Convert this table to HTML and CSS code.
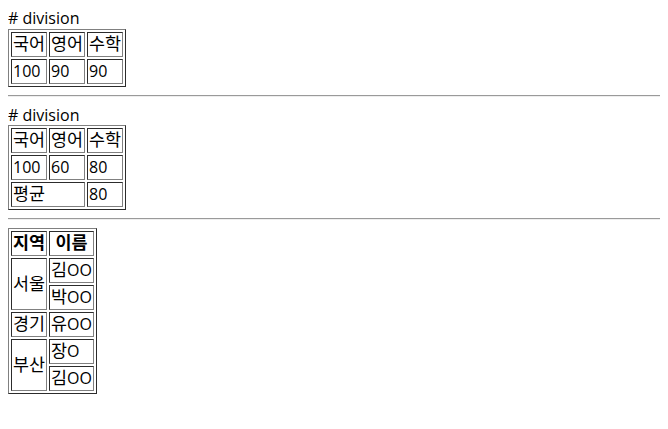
FILE: index.html
```html
<!DOCTYPE html>
<html lang="ko">
<head>
<meta charset="utf-8">
<link rel="stylesheet" href="styles.css">
</head>
<body>
<div class="title"># division</div>
<table class="grid">
  <tr><td><span class="ko">국어</span></td><td><span class="ko">영어</span></td><td><span class="ko">수학</span></td></tr>
  <tr><td>100</td><td>90</td><td>90</td></tr>
</table>
<hr class="rule">
<div class="title"># division</div>
<table class="grid">
  <tr><td><span class="ko">국어</span></td><td><span class="ko">영어</span></td><td><span class="ko">수학</span></td></tr>
  <tr><td>100</td><td>60</td><td>80</td></tr>
  <tr><td colspan="2"><span class="ko">평균</span></td><td>80</td></tr>
</table>
<hr class="rule">
<table class="grid">
  <tr><th><span class="ko">지역</span></th><th><span class="ko">이름</span></th></tr>
  <tr><td rowspan="2"><span class="ko">서울</span></td><td><span class="ko">김</span>OO</td></tr>
  <tr><td><span class="ko">박</span>OO</td></tr>
  <tr><td><span class="ko">경기</span></td><td><span class="ko">유</span>OO</td></tr>
  <tr><td rowspan="2"><span class="ko">부산</span></td><td><span class="ko">장</span>O</td></tr>
  <tr><td><span class="ko">김</span>OO</td></tr>
</table>
</body>
</html>
```
FILE: styles.css
```css
body {
  margin: 8px;
  font-family: "Open Sans", "Noto Sans CJK KR", sans-serif;
  font-size: 16px;
  line-height: 21px;
  color: #000;
  background: #fff;
}
.title {
  line-height: 20.5px;
}
.ko {
  font-family: "Noto Sans CJK KR", sans-serif;
  font-size: 17.4px;
  line-height: 0;
}
.grid {
  border: 1px outset gray;
  border-spacing: 2px;
  border-collapse: separate;
}
.grid td,
.grid th {
  border: 1px inset gray;
  padding: 1px;
  line-height: 21px;
}
.grid th {
  font-weight: bold;
  text-align: center;
}
.grid th .ko {
  font-weight: bold;
}
.rule {
  box-sizing: border-box;
  width: calc(100% + 8px);
  margin: 8px 0;
  height: 2px;
  border: 0;
  border-top: 1px solid #9a9a9a;
  border-bottom: 1px solid #eeeeee;
}
```
